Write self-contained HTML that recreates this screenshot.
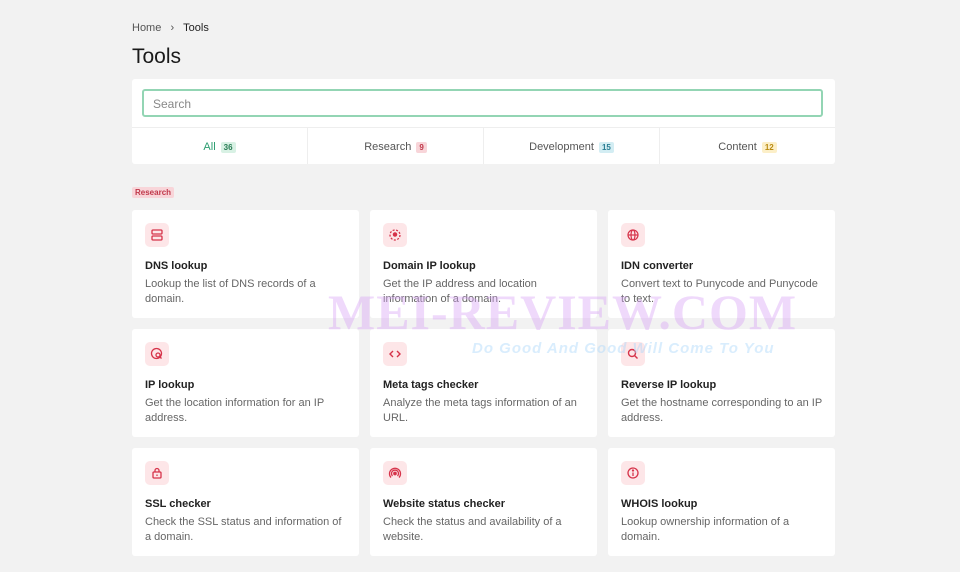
<!DOCTYPE html>
<html><head><meta charset="utf-8"><style>
*{box-sizing:border-box;margin:0;padding:0}
body{width:960px;height:572px;background:#f2f2f2;font-family:"Liberation Sans",sans-serif;position:relative;overflow:hidden;color:#222}
.bc{position:absolute;left:132px;top:22px;font-size:11px;color:#555}
.bc b{font-weight:normal;color:#222}
h1{position:absolute;left:132px;top:45px;font-size:21px;font-weight:normal;color:#1a1a1a}
.panel{position:absolute;left:132px;top:79px;width:703px;height:85px;background:#fff;border-radius:3px}
.search{position:absolute;left:10px;top:10px;width:681px;height:28px;border:2px solid #93d5b4;border-radius:3px;font-size:12px;color:#888;padding:6px 9px}
.tabs{position:absolute;left:0;top:48px;width:703px;height:37px;border-top:1px solid #eee;display:flex}
.tab{flex:1;display:flex;align-items:center;justify-content:center;font-size:11px;color:#555;border-left:1px solid #eee;padding-top:2px}
.tab:first-child{border-left:none;color:#2a9d6f}
.n{font-size:8px;font-weight:bold;padding:1px 3px;border-radius:2px;margin-left:5px}
.tag{position:absolute;left:132px;top:187px;font-size:8px;font-weight:bold;background:#f8d5d9;color:#c0394b;padding:1px 3px;border-radius:2px}
.card{position:absolute;width:227px;height:108px;background:#fff;border-radius:3px}
.ic{position:absolute;left:13px;top:13px;width:24px;height:24px;background:#fde6e8;border-radius:5px;display:flex;align-items:center;justify-content:center}
.t{position:absolute;left:13px;top:50px;font-size:11px;font-weight:bold;color:#222}
.d{position:absolute;left:13px;top:67px;width:205px;font-size:11px;line-height:15px;color:#666}
.wm{position:absolute;left:328px;top:283px;font-family:"Liberation Serif",serif;font-weight:bold;font-size:50px;color:rgba(215,160,245,.4);letter-spacing:1px}
.wm2{position:absolute;left:472px;top:340px;font-style:italic;font-weight:bold;font-size:15px;color:rgba(170,215,250,.45);letter-spacing:1px}
</style></head><body>
<div class="bc">Home &nbsp;&nbsp;›&nbsp;&nbsp; <b>Tools</b></div>
<h1>Tools</h1>
<div class="panel">
<div class="search">Search</div>
<div class="tabs">
<div class="tab">All<span class="n" style="background:#d8f1e4;color:#2a7d55">36</span></div>
<div class="tab">Research<span class="n" style="background:#f8d5d9;color:#c0394b">9</span></div>
<div class="tab">Development<span class="n" style="background:#d3edf3;color:#2a7d93">15</span></div>
<div class="tab">Content<span class="n" style="background:#fcefc8;color:#b98a10">12</span></div>
</div></div>
<div class="tag">Research</div>

<div class="card" style="left:132px;top:210px"><div class="ic"><svg width="14" height="14" viewBox="0 0 14 14" fill="none" stroke="#d6334a" stroke-width="1.3"><rect x="2" y="2" width="10" height="4" rx="1"/><rect x="2" y="8" width="10" height="4" rx="1"/></svg></div><div class="t">DNS lookup</div><div class="d">Lookup the list of DNS records of a domain.</div></div>
<div class="card" style="left:370px;top:210px"><div class="ic"><svg width="14" height="14" viewBox="0 0 14 14" fill="none" stroke="#d6334a" stroke-width="1.3"><circle cx="7" cy="7" r="5" stroke-dasharray="2 1.5"/><circle cx="7" cy="6.5" r="1.6" fill="#d6334a"/></svg></div><div class="t">Domain IP lookup</div><div class="d">Get the IP address and location information of a domain.</div></div>
<div class="card" style="left:608px;top:210px"><div class="ic"><svg width="14" height="14" viewBox="0 0 14 14" fill="none" stroke="#d6334a" stroke-width="1.2"><circle cx="7" cy="7" r="5"/><ellipse cx="7" cy="7" rx="2" ry="5"/><path d="M2 7h10"/></svg></div><div class="t">IDN converter</div><div class="d">Convert text to Punycode and Punycode to text.</div></div>

<div class="card" style="left:132px;top:329px"><div class="ic"><svg width="14" height="14" viewBox="0 0 14 14" fill="none" stroke="#d6334a" stroke-width="1.3"><circle cx="6.5" cy="6.5" r="5"/><circle cx="8" cy="8" r="2"/><path d="M9.5 9.5l2 2"/></svg></div><div class="t">IP lookup</div><div class="d">Get the location information for an IP address.</div></div>
<div class="card" style="left:370px;top:329px"><div class="ic"><svg width="14" height="14" viewBox="0 0 14 14" fill="none" stroke="#d6334a" stroke-width="1.4"><path d="M5 4L2 7l3 3M9 4l3 3-3 3"/></svg></div><div class="t">Meta tags checker</div><div class="d">Analyze the meta tags information of an URL.</div></div>
<div class="card" style="left:608px;top:329px"><div class="ic"><svg width="14" height="14" viewBox="0 0 14 14" fill="none" stroke="#d6334a" stroke-width="1.4"><circle cx="6" cy="6" r="3.5"/><path d="M8.5 8.5l3 3"/></svg></div><div class="t">Reverse IP lookup</div><div class="d">Get the hostname corresponding to an IP address.</div></div>

<div class="card" style="left:132px;top:448px"><div class="ic"><svg width="14" height="14" viewBox="0 0 14 14" fill="none" stroke="#d6334a" stroke-width="1.3"><rect x="3" y="6" width="8" height="6" rx="1"/><path d="M5 6V4.5a2 2 0 014 0V6"/><path d="M7 8.5v1.5"/></svg></div><div class="t">SSL checker</div><div class="d">Check the SSL status and information of a domain.</div></div>
<div class="card" style="left:370px;top:448px"><div class="ic"><svg width="14" height="14" viewBox="0 0 14 14" fill="none" stroke="#d6334a" stroke-width="1.3"><circle cx="7" cy="7.5" r="1.2" fill="#d6334a"/><path d="M4.5 10a3.5 3.5 0 115 0M3 11.5a5.5 5.5 0 118 0"/></svg></div><div class="t">Website status checker</div><div class="d">Check the status and availability of a website.</div></div>
<div class="card" style="left:608px;top:448px"><div class="ic"><svg width="14" height="14" viewBox="0 0 14 14" fill="none" stroke="#d6334a" stroke-width="1.3"><circle cx="7" cy="7" r="5"/><path d="M7 6.5v3.5"/><circle cx="7" cy="4.5" r=".5" fill="#d6334a"/></svg></div><div class="t">WHOIS lookup</div><div class="d">Lookup ownership information of a domain.</div></div>

<div class="wm">MEI-REVIEW.COM</div>
<div class="wm2">Do Good And Good Will Come To You</div>
</body></html>
